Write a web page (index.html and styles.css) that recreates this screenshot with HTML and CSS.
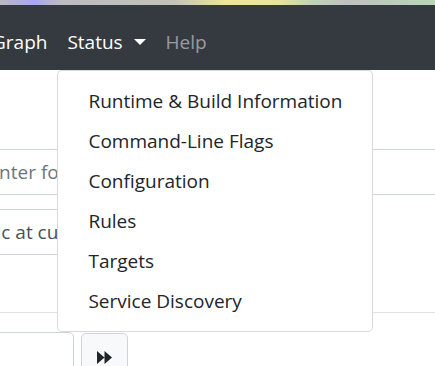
FILE: index.html
```html
<!DOCTYPE html>
<html lang="en">

<head>
  <meta charset="UTF-8" />
  <meta name="viewport" content="width=device-width, initial-scale=1.0" />
  <title>Prometheus Time Series Collection and Processing Server</title>
  <link rel="stylesheet" href="styles.css">
</head>

<body>
  <div class="top-strip"></div>

  <nav class="navbar">
    <ul class="nav-list">
      <li class="nav-item"><a href="#" class="nav-link active">Graph</a></li>
      <li class="nav-item dropdown">
        <a href="#" class="nav-link active">Status <span class="caret"></span></a>
        <div class="dropdown-menu">
          <a href="#" class="dropdown-item">Runtime &amp; Build Information</a>
          <a href="#" class="dropdown-item">Command-Line Flags</a>
          <a href="#" class="dropdown-item">Configuration</a>
          <a href="#" class="dropdown-item">Rules</a>
          <a href="#" class="dropdown-item">Targets</a>
          <a href="#" class="dropdown-item">Service Discovery</a>
        </div>
      </li>
      <li class="nav-item"><a href="#" class="nav-link">Help</a></li>
    </ul>
  </nav>

  <main class="panel">
    <div class="expression">Enter expression (press Shift+Enter for newlines)</div>

    <div class="query-row">
      <button class="execute-btn">Execute</button>
      <div class="metric-select">- insert metric at cursor -</div>
    </div>

    <div class="tabs"></div>

    <div class="time-row">
      <div class="time-input"></div>
      <button class="time-btn" title="Increase time">
        <svg width="15" height="13" viewBox="0 0 15 13">
          <path d="M0 0 L7.5 6.5 L0 13 Z M7.5 0 L15 6.5 L7.5 13 Z" fill="#212529" />
        </svg>
      </button>
    </div>
  </main>
</body>

</html>
```

FILE: styles.css
```css
* {
  box-sizing: border-box;
  margin: 0;
  padding: 0;
}

body {
  font-family: "Open Sans", "Noto Sans", sans-serif;
  font-size: 19px;
  color: #212529;
  background: #fff;
  overflow: hidden;
  height: 366px;
}

.top-strip {
  height: 5px;
  background: linear-gradient(90deg, #b9b9c4 0%, #a9a8ee 8%, #bcbcc2 14%, #c2c2b8 40%, #efe59a 52%, #e8e49c 64%, #bdd3b8 72%, #c0c0c0 80%, #b8d8b8 100%);
}

.navbar {
  background: #343a40;
  height: 65px;
  padding-top: 8px;
  display: flex;
}

.nav-list {
  list-style: none;
  display: flex;
  margin-left: -18px;
}

.nav-item {
  display: flex;
  align-items: center;
}

.nav-link {
  display: block;
  padding: 0 10px;
  color: rgba(255, 255, 255, 0.5);
  text-decoration: none;
  line-height: 30px;
}

.nav-link.active {
  color: #fff;
}

.caret {
  display: inline-block;
  margin-left: 6px;
  vertical-align: 4px;
  border-top: 6px solid #fff;
  border-left: 6px solid transparent;
  border-right: 6px solid transparent;
}

.dropdown {
  position: relative;
}

.dropdown-menu {
  position: absolute;
  top: 100%;
  left: 0;
  z-index: 10;
  width: 316px;
  padding: 10px 0;
  background: #fff;
  border: 1px solid rgba(0, 0, 0, 0.15);
  border-radius: 5px;
}

.dropdown-item {
  display: block;
  padding: 5px 30px;
  line-height: 30px;
  color: #212529;
  text-decoration: none;
  white-space: nowrap;
}

.panel {
  margin-left: -310px;
  width: 1100px;
}

.expression {
  margin-top: 79px;
  height: 46px;
  padding: 7px 34px;
  line-height: 30px;
  color: #6c757d;
  border: 1px solid #ced4da;
  border-radius: 5px;
}

.query-row {
  display: flex;
  gap: 20px;
  margin-top: 14px;
}

.execute-btn {
  width: 150px;
  height: 46px;
  font: inherit;
  color: #fff;
  background: #007bff;
  border: 1px solid #007bff;
  border-radius: 5px;
}

.metric-select {
  width: 470px;
  height: 46px;
  padding: 7px 26px;
  line-height: 30px;
  color: #495057;
  border: 1px solid #ced4da;
  border-radius: 5px;
}

.tabs {
  margin-top: 57px;
  height: 1px;
  background: #dee2e6;
}

.time-row {
  display: flex;
  gap: 7px;
  margin-top: 19px;
}

.time-input {
  width: 384px;
  height: 48px;
  border: 1px solid #ced4da;
  border-radius: 5px;
}

.time-btn {
  width: 47px;
  height: 48px;
  margin-top: 1px;
  display: flex;
  align-items: center;
  justify-content: center;
  background: #f8f9fa;
  border: 1px solid #ced4da;
  border-radius: 5px;
}
```
